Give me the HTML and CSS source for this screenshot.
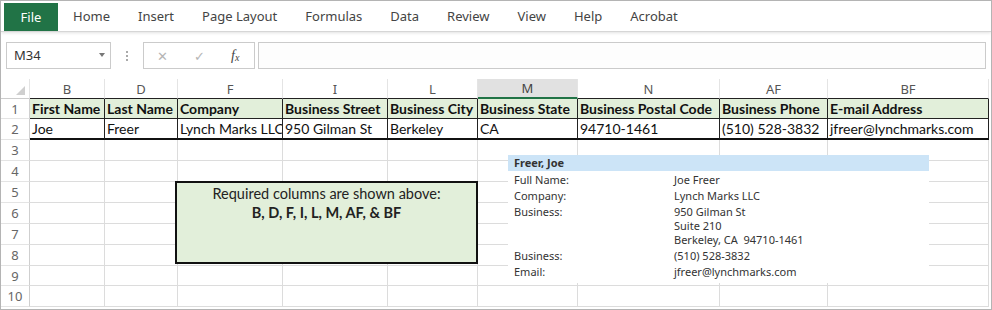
FILE: index.html
```html
<!DOCTYPE html>
<html>
<head>
    <title>Contacts export - required columns</title>
    <meta charset="utf-8">
    <link rel="stylesheet" href="styles.css">
</head>
<body>
<div class="window">
    <div class="ribbon">
        <span class="tab tab-file">File</span>
        <span class="tab">Home</span>
        <span class="tab">Insert</span>
        <span class="tab">Page Layout</span>
        <span class="tab">Formulas</span>
        <span class="tab">Data</span>
        <span class="tab">Review</span>
        <span class="tab">View</span>
        <span class="tab">Help</span>
        <span class="tab">Acrobat</span>
    </div>

    <div class="formula-bar">
        <div class="name-box">M34<span class="caret"></span></div>
        <div class="grip"><span></span><span></span><span></span></div>
        <div class="fx-buttons">
            <span class="fx-cancel">✕</span>
            <span class="fx-enter">✓</span>
            <span class="fx-func">f<sub>x</sub></span>
        </div>
        <div class="formula-input"></div>
    </div>

    <div class="sheet">
        <div class="grid">
            <!-- column headers -->
            <div class="hd corner"><svg width="9" height="9" viewBox="0 0 9 9"><polygon points="9,0 9,9 0,9" fill="#cfcfcf"/></svg></div>
            <div class="hd">B</div>
            <div class="hd">D</div>
            <div class="hd">F</div>
            <div class="hd">I</div>
            <div class="hd">L</div>
            <div class="hd sel">M</div>
            <div class="hd">N</div>
            <div class="hd">AF</div>
            <div class="hd">BF</div>

            <!-- row 1 -->
            <div class="rh">1</div>
            <div class="c r1">First Name</div>
            <div class="c r1">Last Name</div>
            <div class="c r1">Company</div>
            <div class="c r1">Business Street</div>
            <div class="c r1">Business City</div>
            <div class="c r1">Business State</div>
            <div class="c r1">Business Postal Code</div>
            <div class="c r1">Business Phone</div>
            <div class="c r1">E-mail Address</div>

            <!-- row 2 -->
            <div class="rh">2</div>
            <div class="c r2">Joe</div>
            <div class="c r2">Freer</div>
            <div class="c r2">Lynch Marks LLC</div>
            <div class="c r2">950 Gilman St</div>
            <div class="c r2">Berkeley</div>
            <div class="c r2">CA</div>
            <div class="c r2">94710-1461</div>
            <div class="c r2">(510) 528-3832</div>
            <div class="c r2">jfreer@lynchmarks.com</div>

            <div class="rh">3</div>
            <div class="c"></div><div class="c"></div><div class="c"></div><div class="c"></div><div class="c"></div><div class="c"></div><div class="c"></div><div class="c"></div><div class="c"></div>
            <div class="rh">4</div>
            <div class="c"></div><div class="c"></div><div class="c"></div><div class="c"></div><div class="c"></div><div class="c"></div><div class="c"></div><div class="c"></div><div class="c"></div>
            <div class="rh">5</div>
            <div class="c"></div><div class="c"></div><div class="c"></div><div class="c"></div><div class="c"></div><div class="c"></div><div class="c"></div><div class="c"></div><div class="c"></div>
            <div class="rh">6</div>
            <div class="c"></div><div class="c"></div><div class="c"></div><div class="c"></div><div class="c"></div><div class="c"></div><div class="c"></div><div class="c"></div><div class="c"></div>
            <div class="rh">7</div>
            <div class="c"></div><div class="c"></div><div class="c"></div><div class="c"></div><div class="c"></div><div class="c"></div><div class="c"></div><div class="c"></div><div class="c"></div>
            <div class="rh">8</div>
            <div class="c"></div><div class="c"></div><div class="c"></div><div class="c"></div><div class="c"></div><div class="c"></div><div class="c"></div><div class="c"></div><div class="c"></div>
            <div class="rh">9</div>
            <div class="c"></div><div class="c"></div><div class="c"></div><div class="c"></div><div class="c"></div><div class="c"></div><div class="c"></div><div class="c"></div><div class="c"></div>
            <div class="rh">10</div>
            <div class="c"></div><div class="c"></div><div class="c"></div><div class="c"></div><div class="c"></div><div class="c"></div><div class="c"></div><div class="c"></div><div class="c"></div>
        </div>

        <div class="note">
            <div>Required columns are shown above:</div>
            <div class="note-cols">B, D, F, I, L, M, AF, &amp; BF</div>
        </div>

        <div class="card">
            <div class="card-title">Freer, Joe</div>
            <div class="card-body">
                <span>Full Name:</span><span>Joe Freer</span>
                <span>Company:</span><span>Lynch Marks LLC</span>
                <span>Business:</span><span>950 Gilman St<br>Suite 210<br>Berkeley, CA&nbsp; 94710-1461</span>
                <span>Business:</span><span>(510) 528-3832</span>
                <span>Email:</span><span>jfreer@lynchmarks.com</span>
            </div>
        </div>
    </div>
</div>
</body>
</html>
```

FILE: styles.css
```css
body {
    margin: 0;
    font-family: "Noto Sans", sans-serif;
    background-color: #fff;
}

.window {
    width: 992px;
    height: 310px;
    box-sizing: border-box;
    border: 1px solid #b4b4b4;
    overflow: hidden;
}

/* ribbon tabs */
.ribbon {
    height: 30px;
    display: flex;
    padding-left: 3px;
    border-bottom: 1px solid #d6d6d6;
    box-shadow: 0 1px 3px rgba(0, 0, 0, 0.12);
}

.tab {
    display: flex;
    align-items: center;
    padding: 0 14px;
    font-size: 13px;
    color: #444;
}

.tab-file {
    width: 54px;
    margin-top: 2px;
    margin-right: 1px;
    padding: 0;
    justify-content: center;
    background-color: #217346;
    color: #fff;
}

/* formula bar */
.formula-bar {
    display: flex;
    height: 27px;
    margin-top: 10px;
    padding-left: 5px;
}

.name-box {
    position: relative;
    width: 105px;
    box-sizing: border-box;
    border: 1px solid #cbcbcb;
    padding-left: 7px;
    font-size: 13px;
    line-height: 25px;
    color: #333;
}

.caret {
    position: absolute;
    right: 5px;
    top: 10px;
    border-left: 3px solid transparent;
    border-right: 3px solid transparent;
    border-top: 4px solid #777;
}

.grip {
    width: 32px;
    display: flex;
    flex-direction: column;
    align-items: center;
    justify-content: center;
    gap: 2px;
}

.grip span {
    width: 2px;
    height: 2px;
    background-color: #aaa;
}

.fx-buttons {
    width: 112px;
    box-sizing: border-box;
    border: 1px solid #cbcbcb;
    display: flex;
    align-items: center;
    font-size: 13px;
}

.fx-cancel {
    margin-left: 13px;
    color: #b5b5b5;
}

.fx-enter {
    margin-left: 26px;
    color: #b5b5b5;
}

.fx-func {
    margin-left: 26px;
    font-family: "Liberation Serif", serif;
    font-style: italic;
    font-size: 14px;
    color: #444;
}

.fx-func sub {
    font-size: 10px;
    vertical-align: -1px;
}

.formula-input {
    width: 728px;
    margin-left: 3px;
    box-sizing: border-box;
    border: 1px solid #cbcbcb;
    background-color: #fdfdfd;
}

/* worksheet */
.sheet {
    position: relative;
    margin-top: 10px;
}

.grid {
    display: grid;
    grid-template-columns: 29px 75px 73px 105px 105px 90px 100px 142px 108px 161px;
    grid-template-rows: 20px 20px 21px 21px 21px 21px 21px 21px 21px 20px 21px;
}

.grid > div {
    box-sizing: border-box;
    border-right: 1px solid #dcdcdc;
    border-bottom: 1px solid #dcdcdc;
}

.hd {
    display: flex;
    align-items: center;
    justify-content: center;
    font-size: 13px;
    color: #555;
    border-right-color: #e4e4e4 !important;
    border-bottom-color: #222 !important;
}

.hd.corner {
    align-items: flex-end;
    justify-content: flex-end;
    padding: 0 4px 3px 0;
    border-bottom-color: #ccc !important;
}

.hd.sel {
    background-color: #e1e1e1;
    color: #444;
    border-bottom: 2px solid #217346 !important;
}

.rh {
    display: flex;
    align-items: center;
    justify-content: center;
    font-size: 13px;
    color: #666;
    border-right-color: #cfcfcf !important;
    border-bottom-color: #e4e4e4 !important;
}

.c {
    display: flex;
    align-items: center;
    padding-left: 2px;
    font-family: "Lato", sans-serif;
    font-size: 14px;
    color: #111;
    white-space: nowrap;
    overflow: hidden;
}

.r1 {
    background-color: #e2efda;
    font-weight: bold;
    border-right-color: #222 !important;
    border-bottom-color: #222 !important;
}

.r2 {
    border-right-color: #222 !important;
    border-bottom: 2px solid #111 !important;
}

/* text box over the grid */
.note {
    position: absolute;
    left: 174px;
    top: 102px;
    width: 303px;
    height: 83px;
    box-sizing: border-box;
    border: 2px solid #111;
    background-color: #e2efda;
    padding-top: 1px;
    text-align: center;
    font-family: "Lato", sans-serif;
    font-size: 14.5px;
    line-height: 19px;
    color: #222;
}

.note-cols {
    font-weight: bold;
}

/* contact card pasted over the grid */
.card {
    position: absolute;
    left: 507px;
    top: 76px;
    width: 421px;
    height: 128px;
    background-color: #fff;
    font-size: 11px;
    color: #333;
}

.card-title {
    height: 16px;
    line-height: 16px;
    padding-left: 6px;
    background-color: #cce4f7;
    font-weight: bold;
}

.card-body {
    display: grid;
    grid-template-columns: 160px 1fr;
    row-gap: 2px;
    padding: 2px 6px;
    line-height: 14px;
}
```
